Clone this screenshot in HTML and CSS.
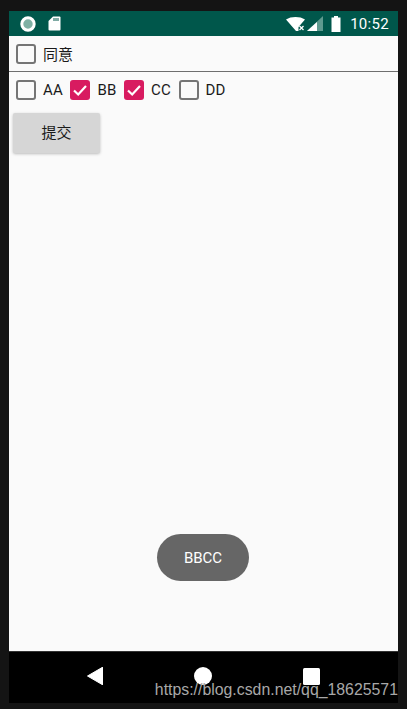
FILE: index.html
```html
<!DOCTYPE html>
<html lang="en">
<head>
    <meta charset="UTF-8">
    <meta name="viewport" content="width=device-width, initial-scale=1.0">
    <title>CheckBox</title>
    <link rel="stylesheet" href="styles.css">
</head>
<body>
    <div class="phone">
        <div class="status-bar">
            <svg class="status-icon" width="16" height="16" viewBox="0 0 16 16">
                <circle cx="8" cy="8" r="6.2" fill="#7fb0a4" stroke="#fff" stroke-width="3"/>
            </svg>
            <svg class="status-icon sd" width="13" height="15" viewBox="0 0 13 15">
                <path d="M5 0.5H11.5A1 1 0 0 1 12.5 1.5V13.5A1 1 0 0 1 11.5 14.5H1.5A1 1 0 0 1 0.5 13.5V5Z" fill="#fff"/>
                <path d="M6 2V5M8 2V5M10 2V5" stroke="#00574b" stroke-width="1"/>
            </svg>
            <div class="status-right">
                <svg width="20" height="14" viewBox="0 0 20 14">
                    <path d="M0 2.5C5 -0.8 14 -0.8 19 2.5L12.5 10V14H10Z" fill="#fff"/>
                    <path d="M13.5 9L17.5 13M17.5 9L13.5 13" stroke="#fff" stroke-width="1.3"/>
                </svg>
                <svg class="signal" width="16" height="15" viewBox="0 0 16 15">
                    <path d="M16 0V15H0Z" fill="#5e9a8f"/>
                    <path d="M10 6V15H0Z" fill="#fff"/>
                </svg>
                <svg class="battery" width="10" height="16" viewBox="0 0 10 16">
                    <path d="M3 0H7V1.5H9.5V16H0.5V1.5H3Z" fill="#fff"/>
                </svg>
                <span class="clock">10:52</span>
            </div>
        </div>

        <div class="content">
            <div class="agree-row">
                <label class="check"><span class="box"></span>同意</label>
            </div>
            <div class="option-row">
                <label class="check"><span class="box"></span>AA</label>
                <label class="check"><span class="box checked"><svg width="20" height="20" viewBox="0 0 20 20"><path d="M4 10.5L8.2 14.5L16 6" fill="none" stroke="#fff" stroke-width="2.2"/></svg></span>BB</label>
                <label class="check"><span class="box checked"><svg width="20" height="20" viewBox="0 0 20 20"><path d="M4 10.5L8.2 14.5L16 6" fill="none" stroke="#fff" stroke-width="2.2"/></svg></span>CC</label>
                <label class="check"><span class="box"></span>DD</label>
            </div>
            <button class="submit">提交</button>
            <div class="toast">BBCC</div>
        </div>

        <div class="nav-bar">
            <svg width="16" height="18" viewBox="0 0 16 18"><path d="M16 0V18L0.5 9Z" fill="#fff" stroke="#fff" stroke-linejoin="round"/></svg>
            <svg width="18" height="18" viewBox="0 0 18 18"><circle cx="9" cy="9" r="9" fill="#fff"/></svg>
            <svg width="17" height="17" viewBox="0 0 17 17"><rect width="17" height="17" rx="1.5" fill="#fff"/></svg>
        </div>
        <div class="watermark">https://blog.csdn.net/qq_18625571</div>
    </div>
</body>
</html>
```

FILE: styles.css
```css
html, body {
    margin: 0;
    height: 709px;
    overflow: hidden;
}
body {
    box-sizing: border-box;
    padding: 11px 9px 6px;
    background-color: #141414;
    font-family: 'Roboto', 'Noto Sans CJK SC', sans-serif;
}
.phone {
    position: relative;
    display: flex;
    flex-direction: column;
    height: 692px;
    overflow: hidden;
}
.status-bar {
    display: flex;
    align-items: center;
    flex: 0 0 25px;
    padding: 0 9px 0 11px;
    background-color: #00574b;
}
.status-icon.sd {
    margin-left: 12px;
}
.status-right {
    display: flex;
    align-items: center;
    margin-left: auto;
    color: #fff;
    font-size: 15px;
}
.signal {
    margin-left: 1px;
}
.battery {
    margin-left: 8px;
}
.clock {
    margin-left: 9px;
    letter-spacing: 0.3px;
}
.content {
    position: relative;
    flex: 1;
    background-color: #fafafa;
    color: #1a1a1a;
    font-size: 15px;
}
.agree-row {
    display: flex;
    align-items: center;
    height: 35px;
    padding-left: 7px;
    border-bottom: 1px solid #6e6e6e;
}
.option-row {
    display: flex;
    align-items: center;
    height: 36px;
    padding-left: 7px;
    letter-spacing: 0.2px;
}
.check {
    display: flex;
    align-items: center;
    margin-right: 7.5px;
}
.box {
    box-sizing: border-box;
    display: flex;
    width: 20px;
    height: 20px;
    margin-right: 7px;
    border: 2px solid #757575;
    border-radius: 3px;
}
.box.checked {
    border: none;
    background-color: #d81b60;
}
.submit {
    display: block;
    width: 87px;
    height: 40px;
    margin: 5px 0 0 4px;
    padding: 0 0 3px;
    border: none;
    border-radius: 2px;
    background-color: #d6d6d6;
    box-shadow: 0 1px 3px rgba(0,0,0,0.25);
    color: #1a1a1a;
    font-family: inherit;
    font-size: 15px;
}
.toast {
    position: absolute;
    left: 148px;
    top: 498px;
    width: 92px;
    height: 47px;
    border-radius: 24px;
    background-color: #666;
    color: #fff;
    font-size: 15px;
    line-height: 49px;
    text-align: center;
}
.nav-bar {
    display: flex;
    align-items: center;
    flex: 0 0 52px;
    gap: 91px;
    box-sizing: border-box;
    padding: 0 0 3px 78px;
    background-color: #000;
    border-top: 1px solid #333;
}
.watermark {
    position: absolute;
    right: 0;
    bottom: 4px;
    color: #a8a8a8;
    font-family: 'Liberation Sans', sans-serif;
    font-size: 15.85px;
    white-space: nowrap;
}
```
